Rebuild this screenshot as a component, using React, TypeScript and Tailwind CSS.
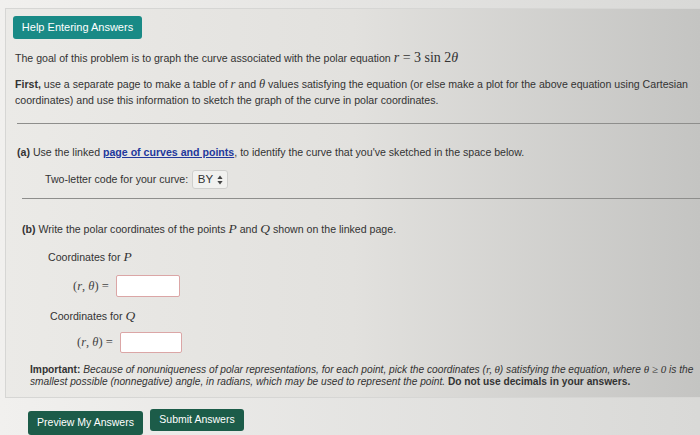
import React from "react";

const M = ({ children, s = "text-[12.5px]" }: { children: React.ReactNode; s?: string }) => (
  <span className={`font-['Liberation_Serif'] italic ${s}`}>{children}</span>
);

export default function App() {
  return (
    <div className="w-[700px] h-[435px] overflow-hidden bg-linear-to-r from-[#f1f0ee] to-[#d9d9d7] font-['Liberation_Sans',Arial,sans-serif] text-[#333333] text-[10.6px]">
      <div className="pt-[8px] pl-[5px]">
        <div className="h-[390px] border border-[#d6d6d4] border-r-0 bg-linear-to-r from-[#ebeae7] via-[#e2e1de] to-[#c4c4c2] pl-[7px] flex flex-col">
          <button className="mt-[7px] w-[129px] h-[23px] rounded-[3px] bg-[#198a86] text-white text-[11px] flex items-center justify-center">
            Help Entering Answers
          </button>
          <p className="mt-[11px] ml-[2px] h-[16px] leading-[16px] whitespace-nowrap">
            The goal of this problem is to graph the curve associated with the polar equation{" "}
            <span className="font-['Liberation_Serif'] text-[14px]">
              <i>r</i> = 3 sin 2<i>θ</i>
            </span>
          </p>
          <p className="mt-[10px] ml-[2px] leading-[16px] whitespace-nowrap">
            <b>First,</b> use a separate page to make a table of <M>r</M> and <M>θ</M> values satisfying the
            equation (or else make a plot for the above equation using Cartesian
            <br />
            coordinates) and use this information to sketch the graph of the curve in polar coordinates.
          </p>
          <div className="mt-[15px] ml-[4px] h-px bg-[#8e8e8c]" />
          <p className="mt-[20px] ml-[4px] leading-[16px] whitespace-nowrap">
            <b>(a)</b> Use the linked{" "}
            <a className="font-bold text-[#22389c] underline">page of curves and points</a>, to identify
            the curve that you've sketched in the space below.
          </p>
          <div className="mt-[10px] ml-[32px] flex items-center gap-[4px]">
            <span>Two-letter code for your curve:</span>
            <div className="h-[19px] w-[36px] rounded-[3px] border border-[#cfcfcd] bg-[#f1f1ef] flex items-center justify-end pr-[4px] gap-[4px] text-[11.5px]">
              <span>BY</span>
              <svg width="6" height="10" viewBox="0 0 6 10">
                <path d="M3 0.5 L5.6 4 L0.4 4 Z" fill="#444" />
                <path d="M3 9.5 L5.6 6 L0.4 6 Z" fill="#444" />
              </svg>
            </div>
          </div>
          <div className="mt-[9px] ml-[9px] h-px bg-[#8e8e8c]" />
          <p className="mt-[22px] ml-[9px] h-[16px] leading-[16px] whitespace-nowrap">
            <b>(b)</b> Write the polar coordinates of the points <M s="text-[13.5px]">P</M> and{" "}
            <M s="text-[13.5px]">Q</M> shown on the linked page.
          </p>
          <p className="mt-[12px] ml-[35px] h-[16px] leading-[16px]">
            Coordinates for <M s="text-[13.5px]">P</M>
          </p>
          <div className="mt-[10px] ml-[60px] flex items-center gap-[7px]">
            <span className="font-['Liberation_Serif'] text-[12.5px] text-[#444]">
              (<i>r</i>, <i>θ</i>) =
            </span>
            <div className="w-[64px] h-[22px] rounded-[2px] border border-[#dba6a6] bg-white" />
          </div>
          <p className="mt-[11px] ml-[37px] h-[16px] leading-[16px]">
            Coordinates for <M s="text-[13.5px]">Q</M>
          </p>
          <div className="mt-[8px] ml-[64px] flex items-center gap-[7px]">
            <span className="font-['Liberation_Serif'] text-[12.5px] text-[#444]">
              (<i>r</i>, <i>θ</i>) =
            </span>
            <div className="w-[62px] h-[21px] rounded-[2px] border border-[#dba6a6] bg-white" />
          </div>
          <p className="mt-[10px] ml-[17px] leading-[12px] text-[10.2px] whitespace-nowrap">
            <b>Important:</b>{" "}
            <i>
              Because of nonuniqueness of polar representations, for each point, pick the coordinates (
              <span className="font-['Liberation_Serif'] text-[11px]">r, θ</span>) satisfying the equation,
              where <span className="font-['Liberation_Serif'] text-[11px]">θ ≥ 0</span> is the
              <br />
              smallest possible (nonnegative) angle, in radians, which may be used to represent the point.
            </i>{" "}
            <b>Do not use decimals in your answers.</b>
          </p>
        </div>
      </div>
      <div className="mt-[13px] ml-[28px] flex gap-[7px]">
        <button className="w-[115px] h-[24px] rounded-[3px] bg-[#1c5c49] text-white text-[10.5px] flex items-center justify-center">
          Preview My Answers
        </button>
        <button className="w-[94px] h-[22px] -mt-[2px] rounded-[3px] bg-[#1c5c49] text-white text-[10.5px] flex items-center justify-center">
          Submit Answers
        </button>
      </div>
    </div>
  );
}
